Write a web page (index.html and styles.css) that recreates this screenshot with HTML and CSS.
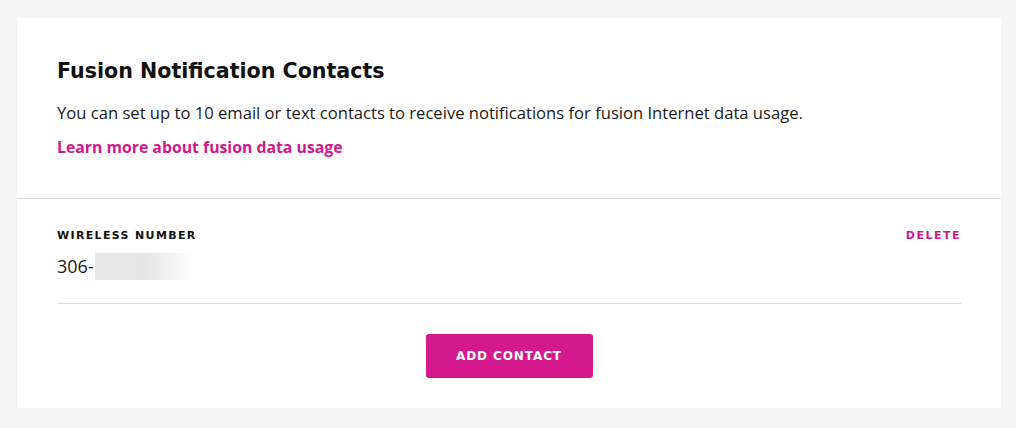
FILE: index.html
```html
<!DOCTYPE html>
<html lang="en">
<head>
<meta charset="utf-8">
<title>Fusion Notification Contacts</title>
<link rel="stylesheet" href="styles.css">
</head>
<body>
<main class="page">
  <section class="card">
    <header class="intro">
      <h1 class="title">Fusion Notification Contacts</h1>
      <p class="desc">You can set up to 10 email or text contacts to receive notifications for fusion Internet data usage.</p>
      <a class="learn" href="#">Learn more about fusion data usage</a>
    </header>
    <div class="contacts">
      <div class="contact">
        <div class="contact-info">
          <div class="label">WIRELESS NUMBER</div>
          <div class="number">306-<span class="masked"></span></div>
        </div>
        <a class="delete" href="#">DELETE</a>
      </div>
      <div class="actions">
        <button class="add" type="button">ADD CONTACT</button>
      </div>
    </div>
  </section>
</main>
</body>
</html>
```
FILE: styles.css
```css
html, body {
  margin: 0;
  padding: 0;
  background: #f5f5f5;
}
body {
  font-family: "Open Sans", "Liberation Sans", sans-serif;
  color: #1a1a1a;
}
.page {
  padding: 18px 15px 21px 17px;
}
.card {
  background: #ffffff;
  width: 984px;
}
.intro {
  padding: 36px 40px 39px;
  border-bottom: 1px solid #dcdcdc;
}
.title {
  margin: 0;
  font-family: "DejaVu Sans", sans-serif;
  font-weight: 700;
  font-size: 20.6px;
  line-height: 34px;
  color: #111111;
}
.desc {
  margin: 13px 0 0;
  font-size: 16.6px;
  line-height: 24px;
  color: #1a1a1a;
}
.learn {
  display: block;
  margin-top: 10px;
  font-size: 15.8px;
  font-weight: 700;
  line-height: 24px;
  color: #d0188e;
  text-decoration: none;
}
.contacts {
  padding: 0 40px 30px;
}
.contact {
  display: flex;
  justify-content: space-between;
  align-items: flex-start;
  padding: 29px 0 23px;
  border-bottom: 1px solid #dcdcdc;
}
.label {
  font-family: "DejaVu Sans", sans-serif;
  font-size: 11px;
  font-weight: 700;
  letter-spacing: 1.35px;
  line-height: 16px;
  color: #111111;
}
.number {
  display: flex;
  align-items: center;
  margin-top: 8px;
  font-size: 18px;
  line-height: 28px;
  color: #1a1a1a;
}
.masked {
  display: inline-block;
  width: 100px;
  height: 27px;
  margin-left: 1px;
  background: linear-gradient(90deg, #e8e8e8 0%, #e6e6e6 50%, #ffffff 100%);
}
.delete {
  font-family: "DejaVu Sans", sans-serif;
  font-size: 11px;
  font-weight: 700;
  letter-spacing: 1.5px;
  line-height: 16px;
  color: #d0188e;
  text-decoration: none;
}
.actions {
  display: flex;
  justify-content: center;
  padding-top: 30px;
}
.add {
  width: 167px;
  height: 44px;
  border: none;
  border-radius: 3px;
  background: #d4188e;
  color: #ffffff;
  font-family: "DejaVu Sans", sans-serif;
  font-size: 12px;
  font-weight: 700;
  letter-spacing: 0.9px;
  cursor: pointer;
}
```
